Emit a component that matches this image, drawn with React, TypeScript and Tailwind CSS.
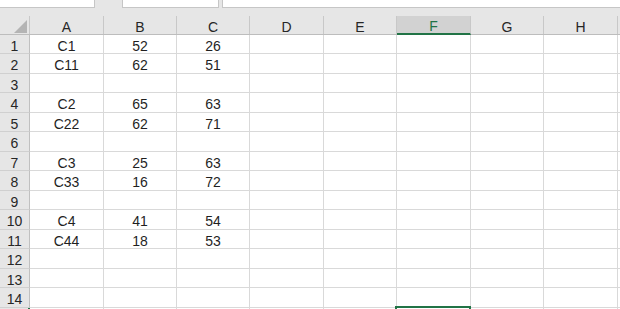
import React from "react";

const cols = [
  { l: "A", w: "w-[74px]" },
  { l: "B", w: "w-[73px]" },
  { l: "C", w: "w-[73px]" },
  { l: "D", w: "w-[74px]" },
  { l: "E", w: "w-[73px]" },
  { l: "F", w: "w-[74px]" },
  { l: "G", w: "w-[73px]" },
  { l: "H", w: "w-[74px]" },
  { l: "", w: "w-[74px]" },
];

const data: Record<number, string[]> = {
  1: ["C1", "52", "26"],
  2: ["C11", "62", "51"],
  4: ["C2", "65", "63"],
  5: ["C22", "62", "71"],
  7: ["C3", "25", "63"],
  8: ["C33", "16", "72"],
  10: ["C4", "41", "54"],
  11: ["C44", "18", "53"],
};

const rowH = ["h-[19px]", "h-[20px]"];

export default function App() {
  const rows = Array.from({ length: 15 }, (_, i) => i + 1);
  return (
    <div
      className="w-[620px] h-[309px] overflow-hidden bg-[#e6e6e6] text-[14px]"
      style={{ fontFamily: '"Liberation Sans", Arial, sans-serif' }}
    >
      {/* formula bar strip */}
      <div className="flex h-[8px]">
        <div className="w-[95px] h-[8px] bg-white border-r border-b border-[#c6c6c6]" />
        <div className="w-[27px]" />
        <div className="w-[97px] h-[8px] bg-white border-l border-r border-b border-[#c6c6c6]" />
        <div className="w-[3px]" />
        <div className="flex-1 h-[8px] bg-white border-l border-b border-[#c6c6c6]" />
      </div>
      <div className="h-[8px]" />
      {/* column headers */}
      <div className="flex h-[19px] border-b border-[#bdbdbd]">
        <div className="w-[30px] shrink-0 border-r border-[#c8c8c8] relative">
          <svg className="absolute left-[14px] top-[4px]" width="13" height="13" viewBox="0 0 13 13">
            <polygon points="13,0 13,13 0,13" fill="#b4b4b4" />
          </svg>
        </div>
        {cols.map((c, ci) =>
          c.l === "F" ? (
            <div
              key={ci}
              className={`${c.w} shrink-0 h-[19px] bg-[#d2d2d2] border-r border-[#c8c8c8] border-b-2 border-b-[#217346] text-[#217346] flex items-center justify-center leading-none pt-[2px]`}
            >
              {c.l}
            </div>
          ) : (
            <div
              key={ci}
              className={`${c.w} shrink-0 h-[18px] border-r border-[#c8c8c8] text-[#262626] flex items-center justify-center leading-none pt-[3px]`}
            >
              {c.l}
            </div>
          )
        )}
      </div>
      {/* rows */}
      {rows.map((r, i) => {
        const d = data[r] || [];
        const sel = r === 15;
        return (
          <div key={r} className={`flex ${rowH[i % 2]} bg-white`}>
            <div
              className={`w-[30px] shrink-0 bg-[#e6e6e6] border-b border-[#d0d0d0] text-[#262626] flex items-center justify-center leading-none pt-[3px] ${
                sel ? "border-r-2 border-r-[#217346] bg-[#d2d2d2]" : "border-r border-r-[#c0c0c0]"
              }`}
            >
              {sel ? "" : r}
            </div>
            {cols.map((c, ci) => (
              <div
                key={ci}
                className={`${c.w} shrink-0 relative border-r border-b border-[#d9d9d9] text-[#1f1f1f] flex items-center justify-center leading-none pt-[3px]`}
              >
                {d[ci] ?? ""}
                {sel && c.l === "F" ? (
                  <div className="absolute left-[-2px] top-[-2px] w-[76px] h-[22px] border-2 border-[#217346]" />
                ) : null}
              </div>
            ))}
          </div>
        );
      })}
    </div>
  );
}
